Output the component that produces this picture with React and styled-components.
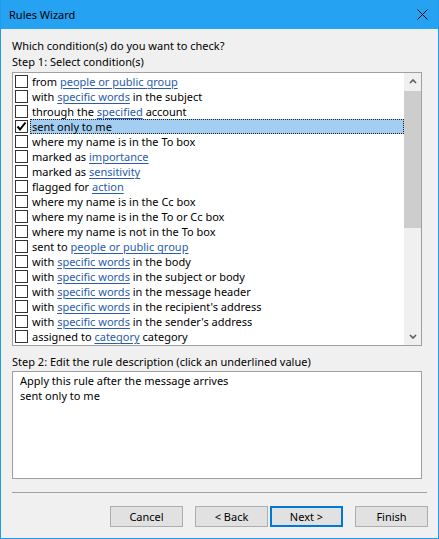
import React from "react";
import styled, { createGlobalStyle } from "styled-components";

const GlobalStyle = createGlobalStyle`
  body {
    margin: 0;
    font-family: "Noto Sans", "Open Sans", sans-serif;
    font-size: 11px;
    color: #000;
  }
`;

const Window = styled.div`
  width: 439px;
  height: 539px;
  box-sizing: border-box;
  border: 1px solid #1e9bef;
  border-top: none;
  background: #f0f0f0;
  display: flex;
  flex-direction: column;
`;

const TitleBar = styled.div`
  height: 29px;
  flex: none;
  background: #25a2f2;
  display: flex;
  align-items: center;
  justify-content: space-between;
  padding: 0 10px 0 8px;
`;

const Title = styled.span`
  font-size: 11px;
  line-height: 16px;
`;

const Body = styled.div`
  flex: 1;
  display: flex;
  flex-direction: column;
  padding: 9px 10px 0 11px;
`;

const Label = styled.div`
  line-height: 16px;
  height: 16px;
  margin-top: ${(p) => p.$mt || 0}px;
`;

const ListBox = styled.div`
  width: 410px;
  height: 274px;
  box-sizing: border-box;
  margin-top: 2px;
  border: 1px solid #a0a0a0;
  background: #fff;
  display: flex;
`;

const Rows = styled.div`
  flex: 1;
  padding: 1px 0 0 0;
`;

const Row = styled.div`
  height: 15px;
  display: flex;
  align-items: center;
`;

const Check = styled.span`
  width: 13px;
  height: 13px;
  box-sizing: border-box;
  border: 1px solid #333;
  background: #fff;
  margin: 0 2px 0 2px;
  flex: none;
  display: flex;
  align-items: center;
  justify-content: center;
`;

const Text = styled.span`
  flex: 1;
  height: 15px;
  line-height: 15px;
  padding-left: 2px;
  box-sizing: border-box;
  white-space: nowrap;
  overflow: hidden;
  ${(p) =>
    p.$selected &&
    `
    background: #a3cdf1;
    outline: 1px dotted #222;
    outline-offset: -1px;
  `}
`;

const Link = styled.span`
  color: #2a5ca8;
  text-decoration: underline;
  text-underline-offset: 2px;
`;

const ScrollBar = styled.div`
  width: 17px;
  flex: none;
  background: #f0f0f0;
  display: flex;
  flex-direction: column;
`;

const Arrow = styled.div`
  height: 17px;
  flex: none;
  display: flex;
  align-items: center;
  justify-content: center;
`;

const Track = styled.div`
  flex: 1;
  display: flex;
  flex-direction: column;
`;

const Thumb = styled.div`
  height: 137px;
  background: #cdcdcd;
  margin-top: 1px;
`;

const DescBox = styled.div`
  width: 410px;
  height: 108px;
  margin-top: 1px;
  box-sizing: border-box;
  border: 1px solid #a0a0a0;
  background: #fff;
  padding: 1px 7px;
  line-height: 15px;
`;

const Separator = styled.div`
  height: 1px;
  background: #a0a0a0;
  margin-top: 13px;
  width: 415px;
`;

const ButtonRow = styled.div`
  display: flex;
  justify-content: flex-end;
  margin-top: 13px;
  width: 416px;
`;

const Button = styled.div`
  width: 73px;
  height: 21px;
  box-sizing: border-box;
  background: #e1e1e1;
  border: ${(p) => (p.$default ? "2px solid #0078d7" : "1px solid #adadad")};
  display: flex;
  align-items: center;
  justify-content: center;
  margin-left: ${(p) => p.$gap}px;
`;

const conditions = [
  ["from ", <Link>people or public group</Link>],
  ["with ", <Link>specific words</Link>, " in the subject"],
  ["through the ", <Link>specified</Link>, " account"],
  ["sent only to me"],
  ["where my name is in the To box"],
  ["marked as ", <Link>importance</Link>],
  ["marked as ", <Link>sensitivity</Link>],
  ["flagged for ", <Link>action</Link>],
  ["where my name is in the Cc box"],
  ["where my name is in the To or Cc box"],
  ["where my name is not in the To box"],
  ["sent to ", <Link>people or public group</Link>],
  ["with ", <Link>specific words</Link>, " in the body"],
  ["with ", <Link>specific words</Link>, " in the subject or body"],
  ["with ", <Link>specific words</Link>, " in the message header"],
  ["with ", <Link>specific words</Link>, " in the recipient's address"],
  ["with ", <Link>specific words</Link>, " in the sender's address"],
  ["assigned to ", <Link>category</Link>, " category"],
];

const CheckMark = () => (
  <svg width="11" height="11" viewBox="0 0 11 11">
    <path d="M1.5 5.5 L4 8.5 L9.5 1.5" fill="none" stroke="#000" strokeWidth="2" />
  </svg>
);

const Chevron = ({ down }) => (
  <svg width="8" height="5" viewBox="0 0 8 5">
    <path
      d={down ? "M1 1 L4 4 L7 1" : "M1 4 L4 1 L7 4"}
      fill="none"
      stroke="#606060"
      strokeWidth="1.7"
    />
  </svg>
);

const CloseIcon = () => (
  <svg width="11" height="11" viewBox="0 0 11 11">
    <path d="M0.5 0.5 L10.5 10.5 M10.5 0.5 L0.5 10.5" stroke="#000" strokeWidth="1" />
  </svg>
);

export default function App() {
  return (
    <>
      <GlobalStyle />
      <Window>
        <TitleBar>
          <Title>Rules Wizard</Title>
          <CloseIcon />
        </TitleBar>
        <Body>
          <Label>Which condition(s) do you want to check?</Label>
          <Label>Step 1: Select condition(s)</Label>
          <ListBox>
            <Rows>
              {conditions.map((parts, i) => (
                <Row key={i}>
                  <Check>{i === 3 && <CheckMark />}</Check>
                  <Text $selected={i === 3}>
                    {parts.map((p, j) => (
                      <React.Fragment key={j}>{p}</React.Fragment>
                    ))}
                  </Text>
                </Row>
              ))}
            </Rows>
            <ScrollBar>
              <Arrow>
                <Chevron />
              </Arrow>
              <Track>
                <Thumb />
              </Track>
              <Arrow>
                <Chevron down />
              </Arrow>
            </ScrollBar>
          </ListBox>
          <Label $mt={8}>Step 2: Edit the rule description (click an underlined value)</Label>
          <DescBox>
            <div>Apply this rule after the message arrives</div>
            <div>sent only to me</div>
          </DescBox>
          <Separator />
          <ButtonRow>
            <Button $gap={0}>Cancel</Button>
            <Button $gap={12}>&lt; Back</Button>
            <Button $gap={2} $default>
              Next &gt;
            </Button>
            <Button $gap={12}>Finish</Button>
          </ButtonRow>
        </Body>
      </Window>
    </>
  );
}
